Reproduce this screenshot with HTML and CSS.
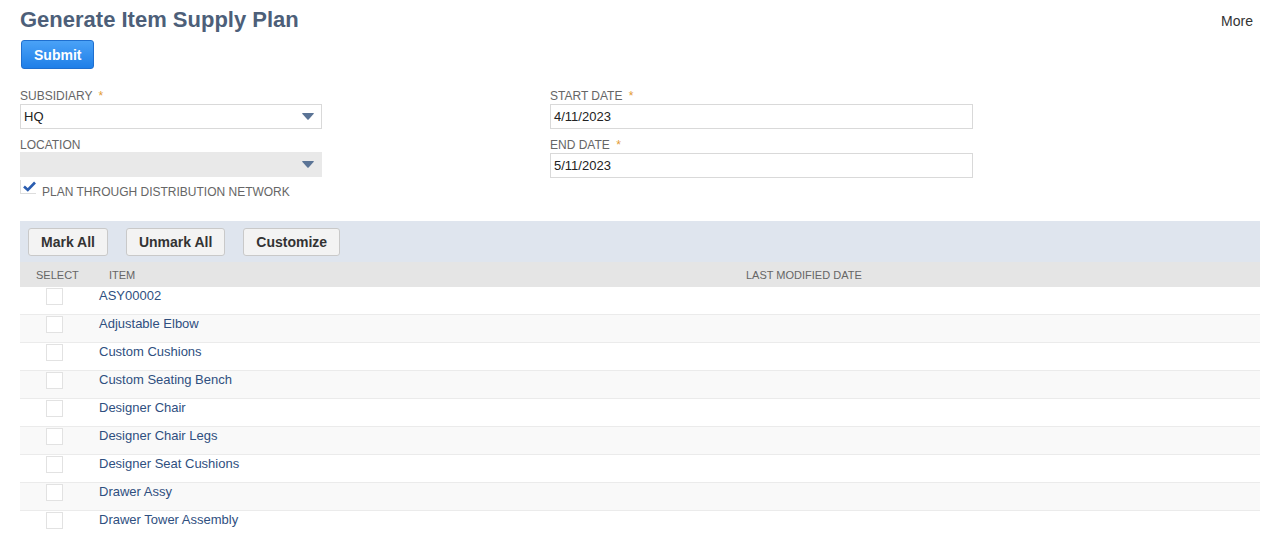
FILE: index.html
```html
<!DOCTYPE html>
<html lang="en">
<head>
  <meta charset="UTF-8">
  <title>Generate Item Supply Plan</title>
  <link rel="stylesheet" href="styles.css">
</head>
<body>
  <div class="page">
    <div class="page-header">
      <h1 class="page-title">Generate Item Supply Plan</h1>
      <a class="more-link">More</a>
    </div>
    <button class="btn-primary">Submit</button>

    <div class="form-grid">
      <div class="form-col left">
        <div class="field">
          <label class="field-label">SUBSIDIARY <span class="req">*</span></label>
          <div class="select-box">
            <span>HQ</span>
            <svg class="caret" width="12" height="7" viewBox="0 0 12 7"><path d="M0 0.5 Q0 0 1 0 H11 Q12 0 12 0.5 L6.6 6.4 Q6 7 5.4 6.4 Z" fill="#5b7496"/></svg>
          </div>
        </div>
        <div class="field">
          <label class="field-label">LOCATION</label>
          <div class="select-box disabled">
            <span></span>
            <svg class="caret" width="12" height="7" viewBox="0 0 12 7"><path d="M0 0.5 Q0 0 1 0 H11 Q12 0 12 0.5 L6.6 6.4 Q6 7 5.4 6.4 Z" fill="#5b7496"/></svg>
          </div>
        </div>
        <div class="check-field">
          <span class="check-on">
            <svg width="13" height="11" viewBox="0 0 13 11"><path d="M1 5.5 L4.8 9 L12 1.5" fill="none" stroke="#2a5db0" stroke-width="2.6"/></svg>
          </span>
          <span class="check-label">PLAN THROUGH DISTRIBUTION NETWORK</span>
        </div>
      </div>
      <div class="form-col right">
        <div class="field">
          <label class="field-label">START DATE <span class="req">*</span></label>
          <div class="text-box">4/11/2023</div>
        </div>
        <div class="field">
          <label class="field-label">END DATE <span class="req">*</span></label>
          <div class="text-box">5/11/2023</div>
        </div>
      </div>
    </div>

    <div class="sublist">
      <div class="sublist-toolbar">
        <button class="btn">Mark All</button>
        <button class="btn">Unmark All</button>
        <button class="btn">Customize</button>
      </div>
      <div class="list-head">
        <span class="col-select">SELECT</span>
        <span class="col-item">ITEM</span>
        <span class="col-date">LAST MODIFIED DATE</span>
      </div>
      <div class="list-row"><span class="col-select"><span class="box"></span></span><a class="col-item">ASY00002</a><span class="col-date"></span></div>
      <div class="list-row"><span class="col-select"><span class="box"></span></span><a class="col-item">Adjustable Elbow</a><span class="col-date"></span></div>
      <div class="list-row"><span class="col-select"><span class="box"></span></span><a class="col-item">Custom Cushions</a><span class="col-date"></span></div>
      <div class="list-row"><span class="col-select"><span class="box"></span></span><a class="col-item">Custom Seating Bench</a><span class="col-date"></span></div>
      <div class="list-row"><span class="col-select"><span class="box"></span></span><a class="col-item">Designer Chair</a><span class="col-date"></span></div>
      <div class="list-row"><span class="col-select"><span class="box"></span></span><a class="col-item">Designer Chair Legs</a><span class="col-date"></span></div>
      <div class="list-row"><span class="col-select"><span class="box"></span></span><a class="col-item">Designer Seat Cushions</a><span class="col-date"></span></div>
      <div class="list-row"><span class="col-select"><span class="box"></span></span><a class="col-item">Drawer Assy</a><span class="col-date"></span></div>
      <div class="list-row"><span class="col-select"><span class="box"></span></span><a class="col-item">Drawer Tower Assembly</a><span class="col-date"></span></div>
    </div>
  </div>
</body>
</html>
```

FILE: styles.css
```css
* {
  margin: 0;
  padding: 0;
  box-sizing: border-box;
}

body {
  font-family: "Liberation Sans", Arial, sans-serif;
  background: #fff;
  color: #333;
  overflow: hidden;
}

.page {
  padding: 6px 20px 0 20px;
}

.page-header {
  display: flex;
  justify-content: space-between;
  align-items: flex-start;
}

.page-title {
  font-size: 22px;
  font-weight: bold;
  color: #4d5f79;
  line-height: 28px;
}

.more-link {
  font-size: 14px;
  color: #333;
  margin-top: 7px;
  margin-right: 7px;
}

.btn-primary {
  margin-top: 6px;
  margin-left: 1px;
  height: 29px;
  padding: 0 12px;
  font-family: inherit;
  font-size: 14px;
  font-weight: bold;
  color: #fff;
  background: linear-gradient(#4aa2f7, #1f7fe8);
  border: 1px solid #1f6fcf;
  border-radius: 3px;
}

.form-grid {
  display: flex;
  margin-top: 20px;
}

.form-col.left {
  width: 530px;
}

.form-col.right {
  width: 423px;
}

.field {
  display: flex;
  flex-direction: column;
  margin-bottom: 9px;
}

.form-col.left .field + .field .field-label {
  margin-bottom: 0;
}

.field-label {
  font-size: 12px;
  color: #666;
  line-height: 14px;
  margin-bottom: 1px;
}

.req {
  color: #e39b35;
  margin-left: 3px;
}

.select-box,
.text-box {
  height: 25px;
  border: 1px solid #d9d9d9;
  font-size: 13px;
  color: #222;
  padding: 0 3px;
  display: flex;
  align-items: center;
  justify-content: space-between;
}

.select-box {
  width: 302px;
}

.select-box.disabled {
  background: #e9e9e9;
  border-color: #e9e9e9;
}

.caret {
  margin-right: 4px;
}

.check-field {
  display: flex;
  align-items: flex-start;
  margin-top: -6px;
}

.check-on {
  width: 16px;
  height: 14px;
  border-left: 1px solid #ddd;
  border-bottom: 1px solid #ddd;
  display: flex;
  align-items: center;
  justify-content: center;
  padding-left: 1px;
}

.check-label {
  font-size: 12px;
  line-height: 14px;
  color: #666;
  margin-left: 6px;
  margin-top: 5px;
}

.sublist {
  margin-top: 22px;
  width: 1240px;
}

.sublist-toolbar {
  background: #dfe5ee;
  height: 41px;
  display: flex;
  align-items: center;
  gap: 18px;
  padding-left: 8px;
}

.btn {
  height: 28px;
  padding: 0 12px;
  font-family: inherit;
  font-size: 14px;
  font-weight: bold;
  color: #333;
  background: #f3f3f3;
  border: 1px solid #c9c9c9;
  border-radius: 3px;
}

.list-head {
  display: flex;
  align-items: center;
  height: 25px;
  background: #e5e5e5;
  font-size: 11px;
  color: #666;
}

.list-head .col-select {
  padding-left: 16px;
}

.list-head .col-item,
.list-head .col-date {
  padding-left: 10px;
}

.col-select {
  width: 79px;
  flex-shrink: 0;
}

.col-item {
  width: 637px;
  flex-shrink: 0;
}

.list-row {
  display: flex;
  align-items: flex-start;
  height: 28px;
  padding-top: 1px;
  border-bottom: 1px solid #ebebeb;
  font-size: 13px;
  line-height: 16px;
}

.list-row:nth-child(odd) {
  background: #fff;
}

.list-row:nth-child(even) {
  background: #f9f9f9;
}

.list-row .col-select {
  padding-left: 26px;
}

.box {
  display: block;
  width: 17px;
  height: 17px;
  border: 1px solid #e2e2e2;
  background: #fff;
}

.list-row .col-item {
  color: #2f4f7f;
}
```
